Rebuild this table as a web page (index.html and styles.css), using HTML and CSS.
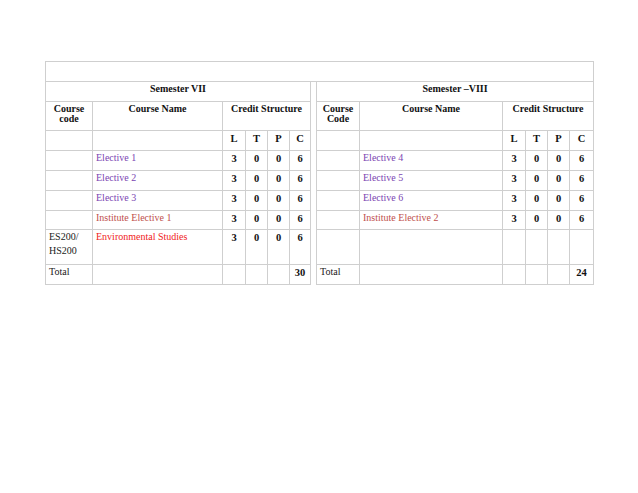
FILE: index.html
```html
<!DOCTYPE html>
<html>
<head>
<meta charset="utf-8">
<link rel="stylesheet" href="styles.css">
</head>
<body>
<table class="sched">
  <colgroup>
    <col class="c-code"><col class="c-name-l"><col class="c-l"><col class="c-t"><col class="c-p"><col class="c-c1">
    <col class="c-gap">
    <col class="c-code2"><col class="c-name-r"><col class="c-l"><col class="c-t"><col class="c-p"><col class="c-c2">
  </colgroup>
  <tr class="r20"><td colspan="13"></td></tr>
  <tr class="r20">
    <td colspan="6" class="hd">Semester VII</td>
    <td rowspan="10" class="gap"></td>
    <td colspan="6" class="hd">Semester –VIII</td>
  </tr>
  <tr class="r29">
    <td class="hd">Course<br>code</td>
    <td class="hd">Course Name</td>
    <td colspan="4" class="hd">Credit Structure</td>
    <td class="hd">Course<br>Code</td>
    <td class="hd">Course Name</td>
    <td colspan="4" class="hd">Credit Structure</td>
  </tr>
  <tr class="r20">
    <td></td><td></td>
    <td class="num">L</td><td class="num">T</td><td class="num">P</td><td class="num">C</td>
    <td></td><td></td>
    <td class="num">L</td><td class="num">T</td><td class="num">P</td><td class="num">C</td>
  </tr>
  <tr class="r20">
    <td></td><td class="txt elec">Elective 1</td>
    <td class="num">3</td><td class="num">0</td><td class="num">0</td><td class="num">6</td>
    <td></td><td class="txt elec">Elective 4</td>
    <td class="num">3</td><td class="num">0</td><td class="num">0</td><td class="num">6</td>
  </tr>
  <tr class="r20">
    <td></td><td class="txt elec">Elective 2</td>
    <td class="num">3</td><td class="num">0</td><td class="num">0</td><td class="num">6</td>
    <td></td><td class="txt elec">Elective 5</td>
    <td class="num">3</td><td class="num">0</td><td class="num">0</td><td class="num">6</td>
  </tr>
  <tr class="r20">
    <td></td><td class="txt elec">Elective 3</td>
    <td class="num">3</td><td class="num">0</td><td class="num">0</td><td class="num">6</td>
    <td></td><td class="txt elec">Elective 6</td>
    <td class="num">3</td><td class="num">0</td><td class="num">0</td><td class="num">6</td>
  </tr>
  <tr class="r19">
    <td></td><td class="txt inst">Institute Elective 1</td>
    <td class="num">3</td><td class="num">0</td><td class="num">0</td><td class="num">6</td>
    <td></td><td class="txt inst">Institute Elective 2</td>
    <td class="num">3</td><td class="num">0</td><td class="num">0</td><td class="num">6</td>
  </tr>
  <tr class="r35">
    <td class="txt">ES200/<br>HS200</td><td class="txt env">Environmental Studies</td>
    <td class="num">3</td><td class="num">0</td><td class="num">0</td><td class="num">6</td>
    <td></td><td></td>
    <td></td><td></td><td></td><td></td>
  </tr>
  <tr class="r20">
    <td class="txt">Total</td><td></td>
    <td></td><td></td><td></td><td class="num">30</td>
    <td class="txt">Total</td><td></td>
    <td></td><td></td><td></td><td class="num">24</td>
  </tr>
</table>
</body>
</html>
```
FILE: styles.css
```css
html, body {
  margin: 0;
  padding: 0;
  background: #ffffff;
}
body {
  padding: 61px 0 0 45px;
  font-family: "Liberation Serif", "Times New Roman", serif;
  font-size: 10px;
  color: #1a1a1a;
}
.sched {
  border-collapse: collapse;
  table-layout: fixed;
  width: 549px;
}
.sched td {
  border: 1px solid #cfcfcf;
  vertical-align: top;
  padding: 2px 2px 0 2px;
  line-height: 14px;
  overflow: hidden;
  white-space: nowrap;
}
.c-code { width: 47px; }
.c-name-l { width: 130px; }
.c-l { width: 23px; }
.c-t { width: 22px; }
.c-p { width: 22px; }
.c-c1 { width: 21px; }
.c-gap { width: 6px; }
.c-code2 { width: 43px; }
.c-name-r { width: 143px; }
.c-c2 { width: 24px; }

.r19 { height: 19px; }
.r20 { height: 20px; }
.r29 { height: 29px; }
.r35 { height: 35px; }

.sched td.gap {
  border-top: 1px solid #cfcfcf;
  border-bottom: none;
  padding: 0;
}
.sched td.hd {
  font-weight: bold;
  text-align: center;
  line-height: 10px;
  padding-top: 2px;
  color: #111;
  white-space: normal;
}
.sched td.num {
  font-weight: bold;
  text-align: center;
  font-size: 10.5px;
  color: #111;
  padding-top: 1px;
}
.sched td.txt {
  text-align: left;
  padding-left: 3px;
  padding-top: 0;
}
.elec { color: #7a45b2; }
.inst { color: #c0504d; }
.env { color: #f01c22; }
```
